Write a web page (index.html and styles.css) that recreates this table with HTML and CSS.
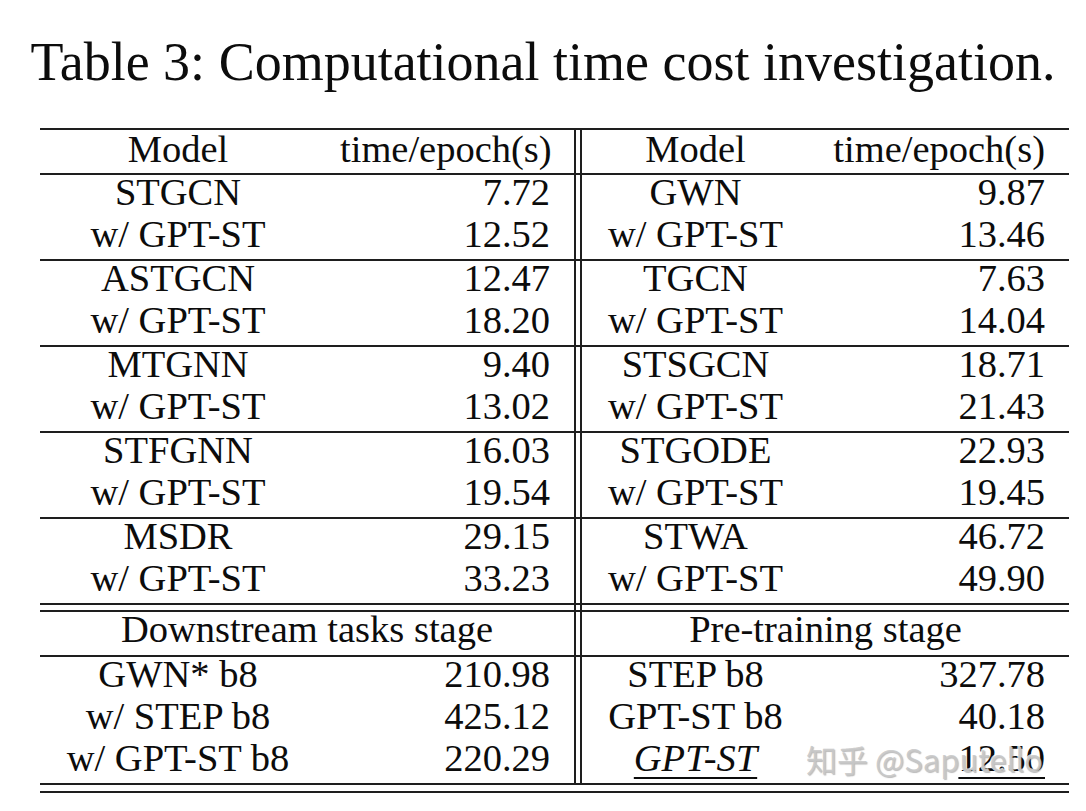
FILE: index.html
```html
<!DOCTYPE html>
<html>
<head>
<meta charset="utf-8">
<link rel="stylesheet" href="styles.css">
</head>
<body>
<div class="page">
  <h1 class="caption">Table 3: Computational time cost investigation.</h1>
  <table class="cost">
    <colgroup>
      <col class="c-model-l"><col class="c-time-l"><col class="c-sep"><col class="c-model-r"><col class="c-time-r">
    </colgroup>
    <tr class="head">
      <td class="m">Model</td><td class="t">time/epoch(s)</td><td class="sep"></td><td class="m">Model</td><td class="t">time/epoch(s)</td>
    </tr>
    <tr class="first">
      <td class="m">STGCN</td><td class="t">7.72</td><td class="sep"></td><td class="m">GWN</td><td class="t">9.87</td>
    </tr>
    <tr>
      <td class="m">w/ GPT-ST</td><td class="t">12.52</td><td class="sep"></td><td class="m">w/ GPT-ST</td><td class="t">13.46</td>
    </tr>
    <tr class="group">
      <td class="m">ASTGCN</td><td class="t">12.47</td><td class="sep"></td><td class="m">TGCN</td><td class="t">7.63</td>
    </tr>
    <tr>
      <td class="m">w/ GPT-ST</td><td class="t">18.20</td><td class="sep"></td><td class="m">w/ GPT-ST</td><td class="t">14.04</td>
    </tr>
    <tr class="group">
      <td class="m">MTGNN</td><td class="t">9.40</td><td class="sep"></td><td class="m">STSGCN</td><td class="t">18.71</td>
    </tr>
    <tr>
      <td class="m">w/ GPT-ST</td><td class="t">13.02</td><td class="sep"></td><td class="m">w/ GPT-ST</td><td class="t">21.43</td>
    </tr>
    <tr class="group">
      <td class="m">STFGNN</td><td class="t">16.03</td><td class="sep"></td><td class="m">STGODE</td><td class="t">22.93</td>
    </tr>
    <tr>
      <td class="m">w/ GPT-ST</td><td class="t">19.54</td><td class="sep"></td><td class="m">w/ GPT-ST</td><td class="t">19.45</td>
    </tr>
    <tr class="group">
      <td class="m">MSDR</td><td class="t">29.15</td><td class="sep"></td><td class="m">STWA</td><td class="t">46.72</td>
    </tr>
    <tr>
      <td class="m">w/ GPT-ST</td><td class="t">33.23</td><td class="sep"></td><td class="m">w/ GPT-ST</td><td class="t">49.90</td>
    </tr>
    <tr class="gap">
      <td></td><td></td><td class="sep"></td><td></td><td></td>
    </tr>
    <tr class="stage">
      <td class="m" colspan="2">Downstream tasks stage</td><td class="sep"></td><td class="m" colspan="2">Pre-training stage</td>
    </tr>
    <tr class="first">
      <td class="m">GWN* b8</td><td class="t">210.98</td><td class="sep"></td><td class="m">STEP b8</td><td class="t">327.78</td>
    </tr>
    <tr>
      <td class="m">w/ STEP b8</td><td class="t">425.12</td><td class="sep"></td><td class="m">GPT-ST b8</td><td class="t">40.18</td>
    </tr>
    <tr class="last">
      <td class="m">w/ GPT-ST b8</td><td class="t">220.29</td><td class="sep"></td><td class="m"><em class="best">GPT-ST</em></td><td class="t"><span class="best">12.50</span></td>
    </tr>
    <tr class="gap bottom">
      <td></td><td></td><td class="sep"></td><td></td><td></td>
    </tr>
  </table>
  <div class="watermark">知乎 @Saputello</div>
</div>
</body>
</html>
```

FILE: styles.css
```css
html, body {
  margin: 0;
  padding: 0;
  background: #ffffff;
}

.page {
  position: relative;
  width: 1086px;
  height: 811px;
  padding-top: 35px;
  box-sizing: border-box;
  font-family: "Liberation Serif", "Times New Roman", serif;
  color: #0c0c0c;
}

.caption {
  margin: 0;
  font-weight: normal;
  font-size: 54px;
  line-height: 54px;
  text-align: center;
  letter-spacing: 0;
}

.cost {
  margin: 39px 0 0 40px;
  width: 1029px;
  table-layout: fixed;
  border-collapse: separate;
  border-spacing: 0;
  font-size: 38.5px;
}

.c-model-l { width: 276px; }
.c-time-l { width: 258px; }
.c-sep { width: 8px; }
.c-model-r { width: 227px; }
.c-time-r { width: 260px; }

.cost td {
  height: 42px;
  padding: 0 24px;
  line-height: 34px;
  vertical-align: top;
  white-space: nowrap;
  box-sizing: border-box;
}

.cost td.m { text-align: center; }
.cost td.t { text-align: right; }

.cost td.sep {
  padding: 0;
  border-left: 2px solid #1e1e1e;
  border-right: 2px solid #1e1e1e;
}

.cost tr.head td {
  height: 47px;
  padding-top: 2px;
  border-top: 2px solid #1e1e1e;
  border-bottom: 2px solid #1e1e1e;
}

.cost tr.group td {
  height: 44px;
  border-top: 2px solid #1e1e1e;
}

.cost tr.gap td {
  height: 9px;
  padding: 0;
  border-top: 2px solid #1e1e1e;
  border-bottom: 2px solid #1e1e1e;
}

.cost tr.gap.bottom td {
  height: 10px;
}

.cost tr.gap.bottom td.sep {
  border-left: none;
  border-right: none;
}

.cost tr.stage td {
  height: 45px;
  border-bottom: 2px solid #1e1e1e;
  padding-top: 0;
}

.cost tr.last td {
  height: 42px;
}

.best {
  text-decoration: underline;
  text-decoration-thickness: 2px;
  text-underline-offset: 6px;
}

em.best {
  font-style: italic;
}

.watermark {
  position: absolute;
  left: 806px;
  top: 739px;
  font-family: "Noto Sans CJK SC", "Noto Sans", sans-serif;
  font-size: 31px;
  line-height: 40px;
  color: rgba(200, 200, 200, 0.9);
  text-shadow: 1px 1px 1px rgba(60, 60, 60, 0.35), -1px -1px 0 rgba(255, 255, 255, 0.8);
  white-space: nowrap;
}
```
